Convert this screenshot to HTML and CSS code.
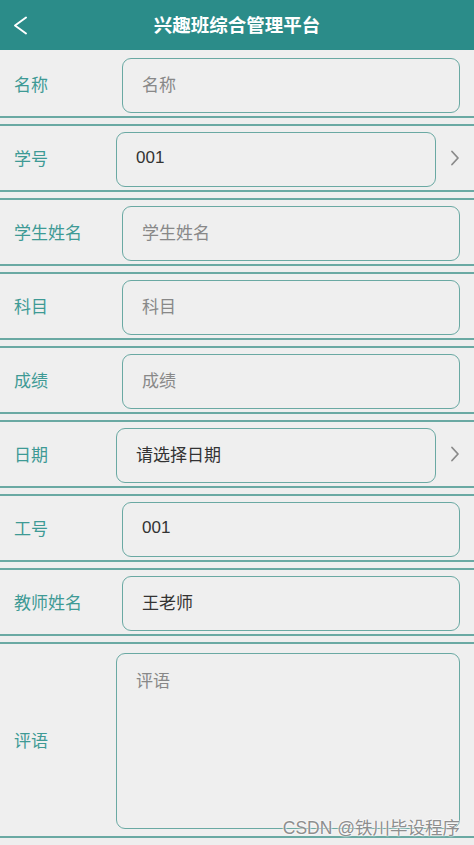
FILE: index.html
```html
<!DOCTYPE html>
<html lang="zh-CN">
<head>
<meta charset="utf-8">
<title>兴趣班综合管理平台</title>
<link rel="stylesheet" href="styles.css">
</head>
<body>
<header class="topbar">
  <svg class="back" width="16" height="24" viewBox="0 0 16 24"><path d="M14 4.5 L3 12.5 L14 20.5" fill="none" stroke="#fff" stroke-width="2" stroke-linecap="round" stroke-linejoin="round"/></svg>
  <h1 class="title">兴趣班综合管理平台</h1>
</header>
<main class="form">
  <div class="row">
    <span class="label">名称</span>
    <div class="field placeholder">名称</div>
  </div>
  <div class="row select">
    <span class="label">学号</span>
    <div class="field">001</div>
    <svg class="chev" width="12" height="18" viewBox="0 0 12 18"><path d="M3 2.5 L9 9 L3 15.5" fill="none" stroke="#8a8a8a" stroke-width="1.8" stroke-linecap="round" stroke-linejoin="round"/></svg>
  </div>
  <div class="row">
    <span class="label">学生姓名</span>
    <div class="field placeholder">学生姓名</div>
  </div>
  <div class="row">
    <span class="label">科目</span>
    <div class="field placeholder">科目</div>
  </div>
  <div class="row">
    <span class="label">成绩</span>
    <div class="field placeholder">成绩</div>
  </div>
  <div class="row select">
    <span class="label">日期</span>
    <div class="field">请选择日期</div>
    <svg class="chev" width="12" height="18" viewBox="0 0 12 18"><path d="M3 2.5 L9 9 L3 15.5" fill="none" stroke="#8a8a8a" stroke-width="1.8" stroke-linecap="round" stroke-linejoin="round"/></svg>
  </div>
  <div class="row">
    <span class="label">工号</span>
    <div class="field">001</div>
  </div>
  <div class="row">
    <span class="label">教师姓名</span>
    <div class="field">王老师</div>
  </div>
  <div class="row tall">
    <span class="label">评语</span>
    <div class="field area placeholder">评语</div>
  </div>
</main>
<div class="watermark">CSDN @铁川毕设程序</div>
</body>
</html>
```
FILE: styles.css
```css
html, body {
  margin: 0;
  padding: 0;
}
body {
  width: 474px;
  height: 845px;
  overflow: hidden;
  background: #eeeeee;
  font-family: "Liberation Sans", "Noto Sans CJK SC", sans-serif;
  position: relative;
}
.topbar {
  height: 50px;
  background: #2b8c89;
  display: flex;
  align-items: center;
  justify-content: center;
  position: relative;
}
.back {
  position: absolute;
  left: 12px;
  top: 13px;
}
.title {
  margin: 0 0 2px;
  color: #fff;
  font-size: 18.5px;
  font-weight: bold;
  font-family: "Noto Sans CJK SC", sans-serif;
}
.form {
  display: flex;
  flex-direction: column;
  gap: 6px;
}
.row {
  height: 64px;
  border-top: 2px solid #6aa9a3;
  border-bottom: 2px solid #6aa9a3;
  display: flex;
  align-items: center;
  padding: 0 14px;
  background: #efefef;
}
.row:first-child {
  border-top-color: transparent;
}
.label {
  flex: 0 0 108px;
  color: #3e9a95;
  font-size: 17px;
  font-family: "Noto Sans CJK SC", sans-serif;
  margin-bottom: 2px;
}
.field {
  flex: 1;
  height: 55px;
  box-sizing: border-box;
  border: 1.5px solid #6aa9a3;
  border-radius: 9px;
  padding: 0 0 3px 19px;
  display: flex;
  align-items: center;
  color: #333;
  font-size: 17px;
  margin-top: 2px;
}
.placeholder {
  color: #888;
}
.select .label {
  flex-basis: 102px;
}
.select .chev {
  margin-left: 13px;
  margin-right: -1px;
}
.row.tall {
  height: 192px;
}
.field.area {
  height: 176px;
  align-items: flex-start;
  padding-top: 13px;
  margin-left: -6px;
}
.watermark {
  position: absolute;
  right: 14px;
  bottom: 6px;
  color: #8e8e8e;
  font-size: 17.5px;
  font-family: "Liberation Sans", "Noto Sans CJK SC", sans-serif;
  text-shadow: 0 0 2px #fff, 0 0 2px #fff;
}
```
